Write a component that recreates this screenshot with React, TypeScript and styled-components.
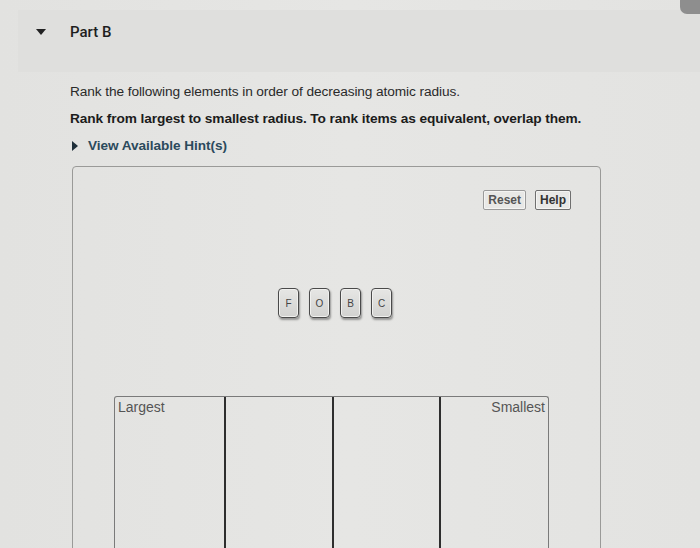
import React from "react";
import styled, { createGlobalStyle } from "styled-components";

const Global = createGlobalStyle`
  html, body { margin: 0; padding: 0; background: #e4e4e2; }
  body { font-family: "Liberation Sans", Arial, Helvetica, sans-serif; }
`;

const Page = styled.div`
  position: relative;
  width: 700px;
  height: 548px;
  overflow: hidden;
  background: linear-gradient(90deg, #e2e2e0 0%, #e6e6e4 50%, #e3e3e1 100%);
`;

const Scroll = styled.div`
  position: absolute;
  right: -6px;
  top: -6px;
  width: 26px;
  height: 20px;
  border-radius: 7px;
  background: #8e8e8e;
`;

const Header = styled.div`
  margin: 10px 0 0 18px;
  height: 62px;
  background: #dfdfdd;
  display: flex;
  align-items: flex-start;
  padding-top: 13px;
  box-sizing: border-box;
`;

const Caret = styled.span`
  width: 0;
  height: 0;
  margin: 6px 0 0 18px;
  border-left: 5px solid transparent;
  border-right: 5px solid transparent;
  border-top: 6px solid #222;
`;

const PartTitle = styled.h2`
  margin: 0 0 0 24px;
  font-family: Roboto, "Liberation Sans", Arial, sans-serif;
  font-size: 15px;
  font-weight: 500;
  color: #1e1e1e;
  line-height: 18px;
`;

const Content = styled.div`
  padding: 11px 0 0 70px;
`;

const Para = styled.p<{ $bold?: boolean }>`
  margin: 0 0 9px;
  font-size: 13.7px;
  line-height: 18px;
  color: ${(p) => (p.$bold ? "#1c1c1c" : "#2a2a2a")};
  font-weight: ${(p) => (p.$bold ? 700 : 400)};
  letter-spacing: -0.1px;
`;

const Hint = styled.div`
  display: flex;
  align-items: center;
  margin-top: 3px;
  font-size: 13.6px;
  font-weight: 700;
  color: #2b4a5c;
  line-height: 18px;
  letter-spacing: -0.05px;
`;

const HintArrow = styled.span`
  width: 0;
  height: 0;
  margin: 0 10px 0 2px;
  border-top: 5px solid transparent;
  border-bottom: 5px solid transparent;
  border-left: 6px solid #1f2f3a;
`;

const Panel = styled.div`
  margin: 11px 0 0 2px;
  width: 529px;
  height: 400px;
  border: 1px solid #9a9a98;
  border-radius: 4px;
  box-sizing: border-box;
  display: flex;
  flex-direction: column;
`;

const Toolbar = styled.div`
  display: flex;
  justify-content: flex-end;
  gap: 9px;
  padding: 23px 29px 0 0;
`;

const Btn = styled.button<{ $dark?: boolean }>`
  height: 20px;
  padding: 0 4px;
  border: 1px solid ${(p) => (p.$dark ? "#6f6f6f" : "#9a9a9a")};
  border-radius: 2px;
  background: #e8e8e6;
  font-family: "Liberation Sans", Arial, sans-serif;
  font-size: 12px;
  font-weight: 700;
  color: ${(p) => (p.$dark ? "#333" : "#555")};
  box-shadow: inset 0 0 0 1px #f4f4f2;
`;

const Tiles = styled.div`
  display: flex;
  gap: 10px;
  padding: 78px 0 0 205px;
`;

const Tile = styled.div`
  width: 21px;
  height: 30px;
  box-sizing: border-box;
  border: 1.5px solid #4a4a4a;
  border-radius: 4px;
  background: linear-gradient(180deg, #e6e6e4 0%, #d2d2d0 100%);
  box-shadow: 1px 2px 2px rgba(0, 0, 0, 0.35), inset 0 0 0 1px #f0f0ee;
  display: flex;
  align-items: center;
  justify-content: center;
  font-size: 10px;
  color: #444;
`;

const Ranking = styled.div`
  margin: 78px 0 0 41px;
  width: 435px;
  flex: 1;
  display: grid;
  grid-template-columns: 109px 108px 107px 1fr;
  border: 1px solid #7a7a7a;
  border-bottom: none;
  border-radius: 3px 3px 0 0;
  box-sizing: border-box;
`;

const Bin = styled.div<{ $right?: boolean; $first?: boolean }>`
  border-left: ${(p) => (p.$first ? "none" : "2px solid #2e2e2e")};
  padding: 2px 3px;
  font-size: 14px;
  color: #555;
  text-align: ${(p) => (p.$right ? "right" : "left")};
  line-height: 16px;
`;

export default function App() {
  return (
    <Page>
      <Global />
      <Scroll />
      <Header>
        <Caret />
        <PartTitle>Part B</PartTitle>
      </Header>
      <Content>
        <Para>Rank the following elements in order of decreasing atomic radius.</Para>
        <Para $bold>
          Rank from largest to smallest radius. To rank items as equivalent, overlap them.
        </Para>
        <Hint>
          <HintArrow />
          View Available Hint(s)
        </Hint>
        <Panel>
          <Toolbar>
            <Btn>Reset</Btn>
            <Btn $dark>Help</Btn>
          </Toolbar>
          <Tiles>
            {["F", "O", "B", "C"].map((t) => (
              <Tile key={t}>{t}</Tile>
            ))}
          </Tiles>
          <Ranking>
            <Bin $first>Largest</Bin>
            <Bin />
            <Bin />
            <Bin $right>Smallest</Bin>
          </Ranking>
        </Panel>
      </Content>
    </Page>
  );
}
